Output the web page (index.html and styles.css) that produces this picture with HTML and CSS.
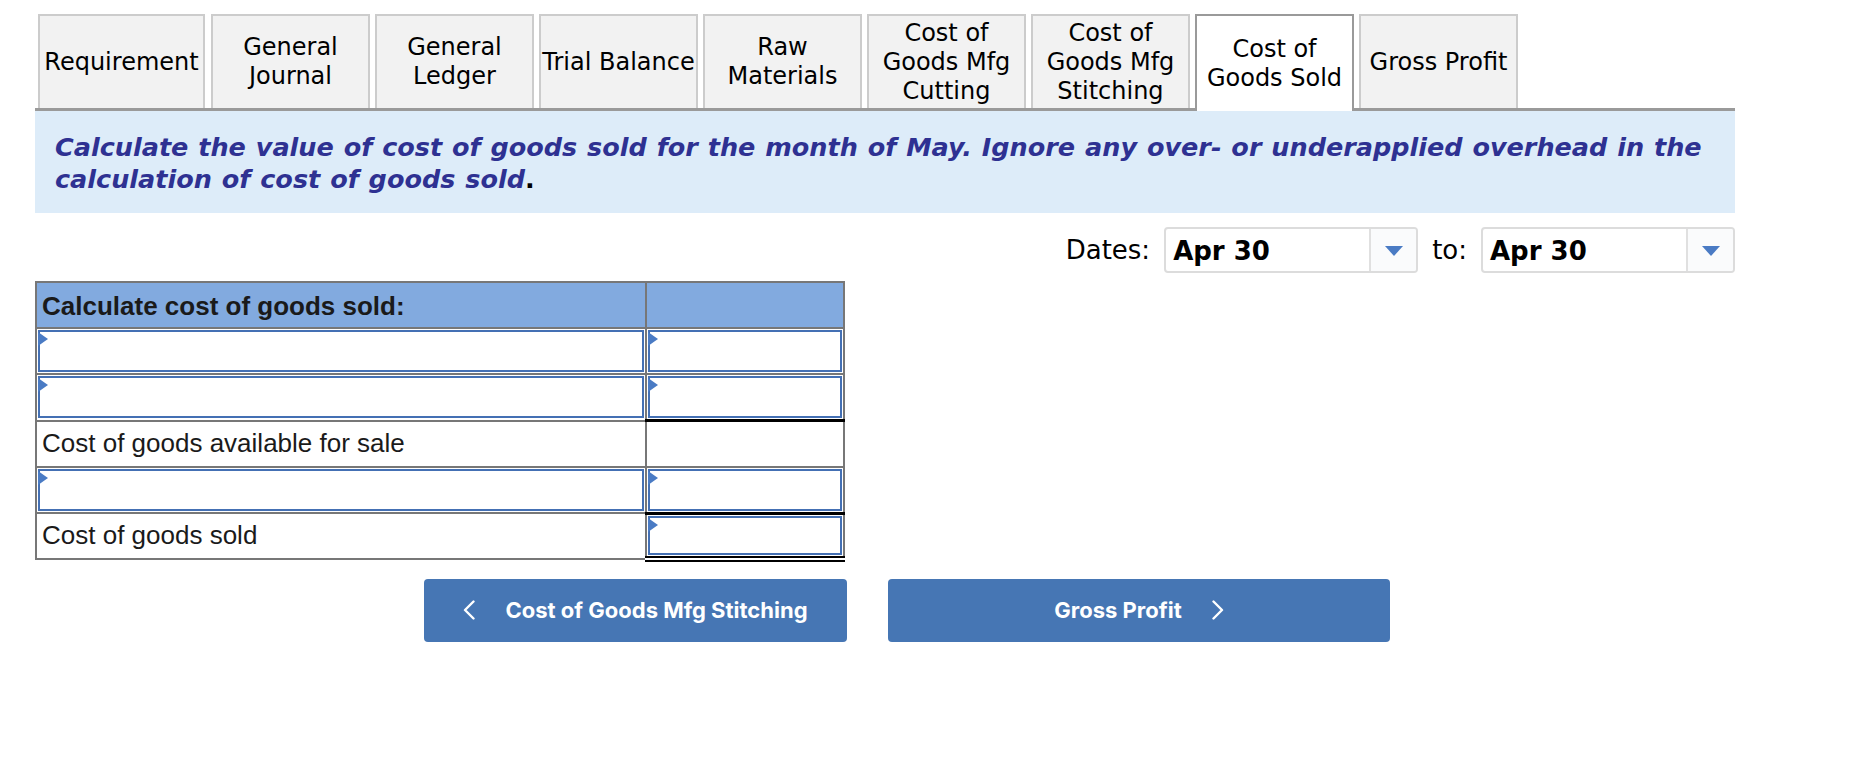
FILE: index.html
```html
<!DOCTYPE html>
<html lang="en">
<head>
<meta charset="utf-8">
<title>Cost of Goods Sold</title>
<link rel="stylesheet" href="styles.css">
</head>
<body>
<div class="page">
  <nav class="tabs">
    <div class="tab tab-wide">Requirement</div>
    <div class="tab">General<br>Journal</div>
    <div class="tab">General<br>Ledger</div>
    <div class="tab">Trial Balance</div>
    <div class="tab">Raw<br>Materials</div>
    <div class="tab">Cost of<br>Goods Mfg<br>Cutting</div>
    <div class="tab">Cost of<br>Goods Mfg<br>Stitching</div>
    <div class="tab tab-active">Cost of<br>Goods Sold</div>
    <div class="tab">Gross Profit</div>
  </nav>

  <div class="instructions">
    <p class="instr-text"><span class="instr-line">Calculate the value of cost of goods sold for the month of May. Ignore any over- or underapplied overhead in the</span> <span class="instr-line">calculation of cost of goods sold</span><span class="instr-dot">.</span></p>
  </div>

  <div class="dates">
    <span class="dates-label">Dates:</span>
    <div class="select">
      <span class="select-value">Apr 30</span>
      <span class="select-arrow"><span class="tri-down"></span></span>
    </div>
    <span class="dates-label">to:</span>
    <div class="select">
      <span class="select-value">Apr 30</span>
      <span class="select-arrow"><span class="tri-down"></span></span>
    </div>
  </div>

  <table class="calc">
    <tr class="head">
      <td class="c1">Calculate cost of goods sold:</td>
      <td class="c2"></td>
    </tr>
    <tr>
      <td class="c1 in"><div class="field"></div></td>
      <td class="c2 in"><div class="field"></div></td>
    </tr>
    <tr>
      <td class="c1 in"><div class="field"></div></td>
      <td class="c2 in under"><div class="field"></div></td>
    </tr>
    <tr>
      <td class="c1 label">Cost of goods available for sale</td>
      <td class="c2"></td>
    </tr>
    <tr>
      <td class="c1 in"><div class="field"></div></td>
      <td class="c2 in under"><div class="field"></div></td>
    </tr>
    <tr class="last">
      <td class="c1 label">Cost of goods sold</td>
      <td class="c2 in double"><div class="field"></div></td>
    </tr>
  </table>

  <div class="nav-buttons">
    <button class="btn btn-prev">
      <svg class="chev" width="12" height="20" viewBox="0 0 12 20"><polyline points="10.5,1.5 2,10 10.5,18.5" fill="none" stroke="#fff" stroke-width="2.4" stroke-linecap="round" stroke-linejoin="round"/></svg>
      <span>Cost of Goods Mfg Stitching</span>
    </button>
    <button class="btn btn-next">
      <span>Gross Profit</span>
      <svg class="chev" width="12" height="20" viewBox="0 0 12 20"><polyline points="1.5,1.5 10,10 1.5,18.5" fill="none" stroke="#fff" stroke-width="2.4" stroke-linecap="round" stroke-linejoin="round"/></svg>
    </button>
  </div>
</div>
</body>
</html>
```

FILE: styles.css
```css
* { box-sizing: border-box; }

html, body {
  margin: 0;
  padding: 0;
  background: #ffffff;
}

body {
  font-family: "DejaVu Sans", Verdana, sans-serif;
  color: #000;
}

.page {
  width: 1700px;
  margin-left: 35px;
  padding-top: 14px;
}

/* Tabs */
.tabs {
  display: flex;
  align-items: flex-end;
  gap: 5px;
  padding-left: 3px;
  height: 94px;
}

.tab {
  width: 159px;
  height: 94px;
  display: flex;
  align-items: center;
  justify-content: center;
  text-align: center;
  font-size: 24px;
  line-height: 29px;
  background: #f2f2f2;
  border: 2px solid #cccccc;
  border-bottom: none;
  white-space: nowrap;
}

.tab-wide { width: 167px; margin-right: 1px; }

.tab-active {
  background: #ffffff;
  border-color: #9a9a9a;
  height: 97px;
  margin-bottom: -3px;
  position: relative;
  z-index: 1;
}

/* Instructions */
.instructions {
  background: #ddecf9;
  border-top: 3px solid #9a9a9a;
  padding: 20px 14px 18px 20px;
}

.instr-text {
  margin: 0;
  font-size: 25.5px;
  line-height: 32px;
  font-weight: bold;
  word-spacing: 1px;
}

.instr-line {
  color: #2e3192;
  font-style: italic;
}

.instr-dot { color: #000; }

/* Dates */
.dates {
  display: flex;
  justify-content: flex-end;
  align-items: center;
  gap: 14px;
  margin-top: 14px;
}

.dates-label {
  font-size: 26px;
}

.select {
  width: 254px;
  height: 46px;
  display: flex;
  border: 2px solid #dcdcdc;
  border-radius: 4px;
  background: #fff;
  overflow: hidden;
}

.select-value {
  flex: 1;
  display: flex;
  align-items: center;
  padding-left: 7px;
  padding-top: 2px;
  font-size: 26px;
  font-weight: bold;
}

.select-arrow {
  width: 47px;
  border-left: 2px solid #e0e0e0;
  background: #fafbfc;
  display: flex;
  align-items: center;
  justify-content: center;
}

.tri-down {
  width: 0;
  height: 0;
  border-left: 9px solid transparent;
  border-right: 9px solid transparent;
  border-top: 10px solid #4a7bc4;
  margin-top: 2px;
}

/* Table */
.calc {
  margin-top: 8px;
  border-collapse: collapse;
  width: 810px;
  font-family: "Liberation Sans", Arial, sans-serif;
  font-size: 26px;
  color: #1a1a1a;
}

.calc tr { height: 46px; }

.calc td {
  border: 2px solid #777777;
  padding: 0 5px;
  vertical-align: middle;
}

.calc .c1 { width: 610px; }

.calc .head td {
  background: #82aadf;
  font-weight: bold;
  padding-top: 2px;
}

.calc td.in {
  padding: 1px;
  height: 46px;
}

.field {
  position: relative;
  height: 42px;
  border: 2px solid #4470b4;
  background: #fff;
}

.field::before {
  content: "";
  position: absolute;
  left: -2px;
  top: 0;
  width: 0;
  height: 0;
  border-top: 7px solid transparent;
  border-bottom: 7px solid transparent;
  border-left: 10px solid #4a7bc4;
}

.calc td.under { border-bottom: 3px solid #000; }

.calc tr.last { height: 42px; }
.calc tr.last td.in { height: 40px; }
.calc td.double { border-bottom: 6px double #000; }
.calc td.double .field { height: 39px; }

/* Buttons */
.nav-buttons {
  display: flex;
  gap: 41px;
  margin-top: 17px;
  padding-left: 389px;
}

.btn {
  height: 63px;
  border: none;
  border-radius: 4px;
  background: #4676b4;
  color: #fff;
  font-family: Inter, "Noto Sans", sans-serif;
  font-weight: bold;
  font-size: 22px;
  display: flex;
  align-items: center;
  justify-content: center;
  gap: 30px;
  padding: 0;
}

.btn-prev { width: 423px; }
.btn-next { width: 502px; }

.chev { display: block; }
```
